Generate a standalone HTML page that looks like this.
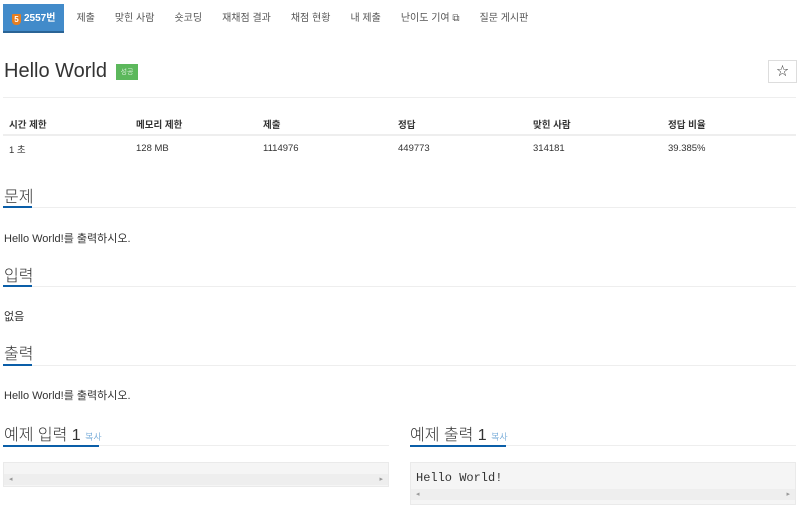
<!DOCTYPE html>
<html><head><meta charset="utf-8"><style>
*{box-sizing:border-box;margin:0;padding:0}
body{width:800px;height:507px;overflow:hidden;background:#fff;font-family:"Liberation Sans","Noto Sans CJK KR",sans-serif;color:#333;font-size:11px;position:relative}
.a{position:absolute}
.nav{top:4px;left:3px;height:29px;display:flex}
.nav div{padding:0 10px;line-height:29px;font-size:10px;color:#555}
.nav .act{background:#428bca;color:#fff;font-weight:bold;border-bottom:2px solid #2a6496;padding:0 9px;margin-right:2px}
.badge5{display:inline-block;width:9px;height:11px;background:#e67e22;color:#fff;font-size:8px;line-height:11px;text-align:center;border-radius:1px 1px 4px 4px;margin-right:3px;vertical-align:-1px}
h1{font-weight:300;font-size:20px;color:#333}
.succ{display:inline-block;background:#5cb85c;color:#fff;font-size:7px;padding:3px 5px;vertical-align:3px;margin-left:3px}
.hr{height:1px;background:#eee}
table{border-collapse:collapse;width:793px}
td,th{text-align:left;padding:0 6px;font-size:9.5px;height:22px}
td{height:26px}
th{border-bottom:2px solid #eee;font-weight:bold;color:#333}
.h{font-size:16px;font-weight:300;color:#333}
.ul{height:2px;background:#0a5ea8}
pre{font-family:"Liberation Mono",monospace}
.box{background:#f5f5f5;border:1px solid #eaeaea}
.sb{height:11px;background:#eee;font-size:7px;color:#999;line-height:11px;padding:0 5px;display:flex;justify-content:space-between}
</style></head><body>
<div class="a nav"><div class="act"><span class="badge5">5</span>2557번</div><div>제출</div><div>맞힌 사람</div><div>숏코딩</div><div>재채점 결과</div><div>채점 현황</div><div>내 제출</div><div>난이도 기여 ⧉</div><div>질문 게시판</div></div>
<div class="a" style="top:60px;left:4px"><h1>Hello World <span class="succ">성공</span></h1></div>
<div class="a" style="left:768px;top:60px;width:29px;height:23px;border:1px solid #ddd;text-align:center;line-height:21px;font-size:12px">☆</div>
<div class="a hr" style="top:97px;left:3px;width:793px"></div>
<div class="a" style="top:113px;left:3px"><table><tr><th style="width:127px">시간 제한</th><th style="width:127px">메모리 제한</th><th style="width:135px">제출</th><th style="width:135px">정답</th><th style="width:135px">맞힌 사람</th><th>정답 비율</th></tr><tr><td>1 초</td><td>128 MB</td><td>1114976</td><td>449773</td><td>314181</td><td>39.385%</td></tr></table></div>
<div class="a h" style="top:183px;left:4px">문제</div>
<div class="a ul" style="top:206px;left:3px;width:29px"></div><div class="a hr" style="top:207px;left:32px;width:764px"></div>
<div class="a" style="top:230px;left:4px">Hello World!를 출력하시오.</div>
<div class="a h" style="top:262px;left:4px">입력</div>
<div class="a ul" style="top:285px;left:3px;width:29px"></div><div class="a hr" style="top:286px;left:32px;width:764px"></div>
<div class="a" style="top:308px;left:4px">없음</div>
<div class="a h" style="top:340px;left:4px">출력</div>
<div class="a ul" style="top:364px;left:3px;width:29px"></div><div class="a hr" style="top:365px;left:32px;width:764px"></div>
<div class="a" style="top:387px;left:4px">Hello World!를 출력하시오.</div>
<div class="a h" style="top:421px;left:4px">예제 입력 1 <span style="font-size:9px;color:#428bca">복사</span></div>
<div class="a ul" style="top:445px;left:3px;width:96px"></div><div class="a hr" style="top:445px;left:99px;width:290px"></div>
<div class="a h" style="top:421px;left:410px">예제 출력 1 <span style="font-size:9px;color:#428bca">복사</span></div>
<div class="a ul" style="top:445px;left:410px;width:96px"></div><div class="a hr" style="top:445px;left:506px;width:290px"></div>
<div class="a box" style="top:462px;left:3px;width:386px;height:25px"><div style="height:11px"></div><div class="sb"><span>◂</span><span>▸</span></div></div>
<div class="a box" style="top:462px;left:410px;width:386px;height:43px"><pre style="font-size:12px;padding:8px 5px 4px;color:#333">Hello World!</pre><div class="sb"><span>◂</span><span>▸</span></div></div>
</body></html>
